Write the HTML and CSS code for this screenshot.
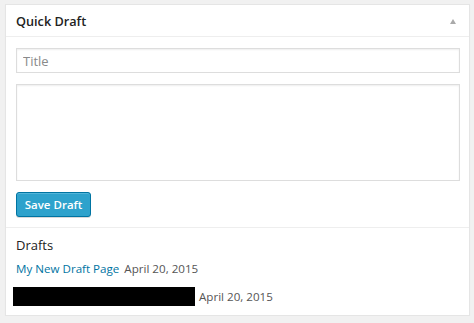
FILE: index.html
```html
<!DOCTYPE html>
<html lang="en">
<head>
    <meta charset="UTF-8">
    <meta name="viewport" content="width=device-width, initial-scale=1.0">
    <title>Quick Draft</title>
    <link rel="stylesheet" href="styles.css">
</head>
<body>
    <div class="postbox">
        <div class="postbox-header">
            <h2>Quick Draft</h2>
            <span class="toggle-arrow"></span>
        </div>
        <form class="quick-draft">
            <input type="text" class="title-input" placeholder="Title">
            <textarea class="content-input"></textarea>
            <div>
                <button type="button" class="button-primary">Save Draft</button>
            </div>
        </form>
        <div class="drafts">
            <h3>Drafts</h3>
            <ul>
                <li><a href="#">My New Draft Page</a> <span class="date">April 20, 2015</span></li>
                <li class="redacted-row"><span class="redacted"></span><span class="date">April 20, 2015</span></li>
            </ul>
        </div>
    </div>
</body>
</html>
```

FILE: styles.css
```css
body {
    font-family: "Open Sans", sans-serif;
    background-color: #f1f1f1;
    color: #444;
    margin: 0;
    padding: 4px 4px 0 5px;
}
.postbox {
    background: #fff;
    border: 1px solid #e5e5e5;
    box-shadow: 0 1px 1px rgba(0, 0, 0, 0.04);
    height: 312px;
    box-sizing: border-box;
}
.postbox-header {
    display: flex;
    align-items: center;
    justify-content: space-between;
    height: 31px;
    padding: 0 13px 0 10px;
    border-bottom: 1px solid #eee;
}
.postbox-header h2 {
    margin: 0;
    font-size: 12.7px;
    font-weight: 600;
    color: #222;
}
.toggle-arrow {
    width: 0;
    height: 0;
    border-left: 3.5px solid transparent;
    border-right: 3.5px solid transparent;
    border-bottom: 5px solid #aaa;
    margin-top: 2px;
}
.quick-draft {
    display: flex;
    flex-direction: column;
    gap: 11px;
    padding: 11px 10px 10px 10px;
    border-bottom: 1px solid #eee;
}
.title-input, .content-input {
    font-family: "Open Sans", sans-serif;
    font-size: 13px;
    width: 444px;
    box-sizing: border-box;
    border: 1px solid #ddd;
    box-shadow: inset 0 1px 2px rgba(0, 0, 0, 0.07);
    margin: 0;
    padding: 3px 6px;
    color: #333;
}
.title-input {
    height: 25px;
}
.title-input::placeholder {
    color: #8a8a8a;
}
.content-input {
    height: 97px;
    resize: none;
}
.button-primary {
    font-family: "Open Sans", sans-serif;
    font-size: 11.5px;
    font-weight: 600;
    height: 25px;
    width: 75px;
    padding: 0;
    background: #2ea2cc;
    border: 1px solid #0074a2;
    border-radius: 3px;
    box-shadow: inset 0 1px 0 rgba(120, 200, 230, 0.5), 0 1px 0 rgba(0, 0, 0, 0.15);
    color: #fff;
    cursor: pointer;
}
.drafts {
    padding: 7px 10px 0 10px;
}
.drafts h3 {
    margin: 0 0 5px;
    font-size: 13px;
    font-weight: 400;
    color: #222;
    line-height: 20px;
}
.drafts ul {
    list-style: none;
    margin: 0;
    padding: 0;
}
.drafts li {
    font-size: 11.6px;
    line-height: 18px;
    display: flex;
    align-items: center;
    gap: 5px;
}
.drafts a {
    color: #0074a2;
    text-decoration: none;
}
.date {
    color: #555;
}
.redacted-row {
    margin-top: 9px;
}
.redacted {
    display: inline-block;
    width: 182px;
    height: 19px;
    background: #000;
    margin-left: -3px;
    margin-right: -1px;
}
```
